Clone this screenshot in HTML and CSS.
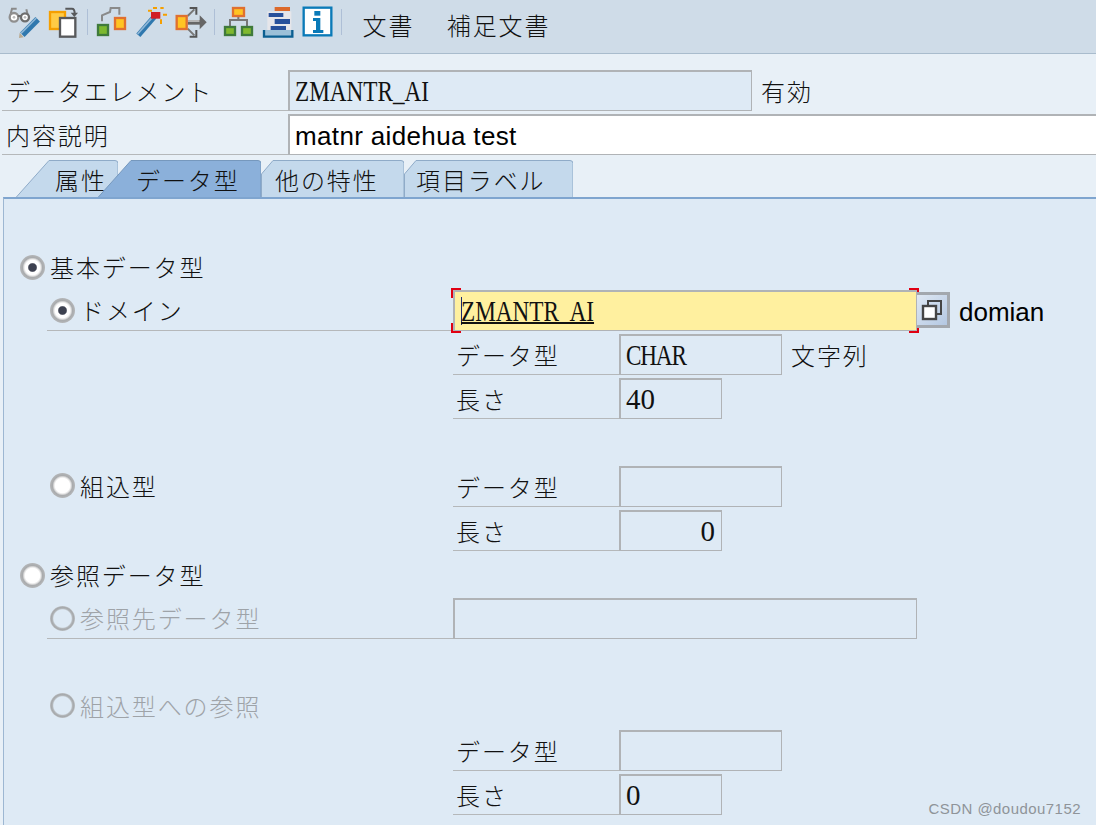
FILE: index.html
```html
<!DOCTYPE html>
<html lang="ja">
<head>
<meta charset="utf-8">
<title>データエレメント</title>
<link rel="stylesheet" href="styles.css">
</head>
<body>
<div class="page">
  <header class="toolbar">
    <svg class="icon" viewBox="21 18 96 96">
      <path d="M110 58 64 104" stroke="#2f78ae" stroke-width="19" fill="none"/>
      <path d="M106 54 60 100" stroke="#8fb6d6" stroke-width="5" fill="none"/>
      <path d="M68 112 54 114 56 98Z" fill="#b9a98f"/>
      <path d="M28 46 33 26h14M80 44l-4-16" stroke="#8a8a8a" stroke-width="6" fill="none"/>
      <circle cx="39" cy="52" r="13" fill="#fff" stroke="#8f8f8f" stroke-width="7"/>
      <circle cx="72" cy="52" r="12" fill="#fff" stroke="#6d6d6d" stroke-width="7"/>
      <path d="M50 48h12" stroke="#6d6d6d" stroke-width="6" fill="none"/>
      <circle cx="39" cy="52" r="4" fill="#bbb"/>
      <circle cx="72" cy="52" r="4" fill="#bbb"/>
    </svg>
    <svg class="icon" viewBox="144 18 96 96">
      <rect x="150" y="36" width="45" height="51" fill="#ffcb45" stroke="#f59f00" stroke-width="7"/>
      <rect x="180" y="54" width="46" height="56" fill="#fff" stroke="#58595b" stroke-width="7"/>
      <path d="M196 26h20q8 0 8 14" stroke="#58595b" stroke-width="6" fill="none"/>
      <path d="M212 38h22l-11 13z" fill="#58595b"/>
    </svg>
    <span class="sep"></span>
    <svg class="icon" viewBox="285 18 96 96">
      <path d="M303 64V46l24-10 2-12h26v20" stroke="#8a8a8a" stroke-width="6" fill="none"/>
      <rect x="291" y="75" width="30" height="30" fill="#7cb82f" stroke="#3f7a3b" stroke-width="7"/>
      <rect x="342" y="54" width="30" height="33" fill="#ffc423" stroke="#e0702f" stroke-width="7"/>
    </svg>
    <svg class="icon" viewBox="402 18 96 96">
      <path d="M460 50 412 106" stroke="#2f78ae" stroke-width="16" fill="none"/>
      <path d="M456 50 410 102" stroke="#8fb6d6" stroke-width="5" fill="none"/>
      <path d="M450 36h28v20h-28z" fill="#d11f26"/>
      <path d="M441 32h12M456 24h12M478 24h10M486 44h12M480 58v14" stroke="#f59f00" stroke-width="6" fill="none"/>
    </svg>
    <svg class="icon" viewBox="520 18 96 96">
      <path d="M558 67h40" stroke="#666" stroke-width="14" fill="none"/>
      <path d="M558 63h36" stroke="#ddd" stroke-width="4" fill="none"/>
      <path d="M594 46l21 21-21 21z" fill="#666"/>
      <path d="M558 48 578 28M558 86l20 20" stroke="#777" stroke-width="6" fill="none"/>
      <path d="M564 24h20v20M564 110h20V90" stroke="#555" stroke-width="6" fill="none"/>
      <rect x="525" y="48" width="30" height="39" fill="#ffc423" stroke="#e0702f" stroke-width="7"/>
    </svg>
    <span class="sep"></span>
    <svg class="icon" viewBox="666 18 96 96">
      <path d="M712 51v9M687 78V60h51v18" stroke="#777" stroke-width="6" fill="none"/>
      <rect x="696" y="24" width="33" height="24" fill="#ffc423" stroke="#e0702f" stroke-width="7"/>
      <rect x="672" y="81" width="30" height="24" fill="#80b92f" stroke="#3f7a3b" stroke-width="7"/>
      <rect x="723" y="81" width="30" height="24" fill="#80b92f" stroke="#3f7a3b" stroke-width="7"/>
    </svg>
    <svg class="icon" viewBox="784 18 96 96">
      <rect x="800" y="34" width="72" height="62" fill="#e6e6ea"/>
      <rect x="822" y="21" width="46" height="12" fill="#dc6a2c"/>
      <rect x="804" y="39" width="44" height="12" fill="#27509b"/>
      <rect x="822" y="57" width="46" height="15" fill="#27509b"/>
      <rect x="810" y="78" width="46" height="12" fill="#27509b"/>
      <path d="M790 90v20h85V90" fill="#9cc0d8" stroke="#0b5f91" stroke-width="7"/>
    </svg>
    <svg class="icon" viewBox="900 18 96 96">
      <rect x="905" y="23" width="83" height="83" fill="#fff" stroke="#0a7ab8" stroke-width="7"/>
      <rect x="937" y="33" width="18" height="14" fill="#0a7ab8"/>
      <path d="M933 54h22v36h9v9h-31v-9h9V63h-9z" fill="#0a7ab8"/>
    </svg>
    <span class="sep"></span>
    <span class="tool-text first">文書</span>
    <span class="tool-text">補足文書</span>
  </header>

  <section class="head">
    <div class="head-row">
      <span class="head-label jp">データエレメント</span>
      <span class="field head-name"><span class="mono">ZMANTR_AI</span></span>
      <span class="jp status">有効</span>
    </div>
    <div class="head-row">
      <span class="head-label jp">内容説明</span>
      <span class="field head-desc">matnr aidehua test</span>
    </div>
  </section>

  <nav class="tabs">
    <div class="tab tab-a"><svg class="tab-bg" viewBox="0 0 103 38" preserveAspectRatio="none"><path d="M.5 38 34 .5H100q3 0 3 3V38Z" fill="#c4d9ec" stroke="#8fabc8"/></svg><span class="jp tab-text">属性</span></div>
    <div class="tab tab-b"><svg class="tab-bg" viewBox="0 0 164 38" preserveAspectRatio="none"><path d="M.5 38 34 .5H161q3 0 3 3V38Z" fill="#8bb0da" stroke="#7698bd"/></svg><span class="jp tab-text">データ型</span></div>
    <div class="tab tab-c"><svg class="tab-bg" viewBox="0 0 143 38" preserveAspectRatio="none"><path d="M.5 38V14L12 .5H140q3 0 3 3V38Z" fill="#c4d9ec" stroke="#8fabc8"/></svg><span class="jp tab-text">他の特性</span></div>
    <div class="tab tab-d"><svg class="tab-bg" viewBox="0 0 169 38" preserveAspectRatio="none"><path d="M.5 38V14L12 .5H166q3 0 3 3V38Z" fill="#c4d9ec" stroke="#8fabc8"/></svg><span class="jp tab-text">項目ラベル</span></div>
  </nav>

  <main class="panel">
    <div class="row top-row">
      <span class="radio checked"></span><span class="jp">基本データ型</span>
    </div>
    <div class="row">
      <div class="main-label"><span class="radio checked"></span><span class="jp">ドメイン</span></div>
      <div class="focus-wrap"><div class="field focus"><span class="caret"></span><span class="mono underline">ZMANTR AI</span></div></div>
      <button class="f4"><svg viewBox="0 0 24 24" width="24" height="24"><rect x="8" y="3" width="13" height="13" fill="none" stroke="#454545" stroke-width="2"/><rect x="3" y="8" width="13" height="13" fill="#fff" stroke="#454545" stroke-width="2.4"/></svg></button>
      <span class="domian">domian</span>
    </div>
    <div class="row indent">
      <span class="sub-label jp">データ型</span><span class="field w162"><span class="mono tight">CHAR</span></span><span class="jp after">文字列</span>
    </div>
    <div class="row indent">
      <span class="sub-label jp">長さ</span><span class="field w102"><span class="mono digits">40</span></span>
    </div>
    <div class="row"></div>
    <div class="row">
      <div class="plain-label"><span class="radio"></span><span class="jp">組込型</span></div>
      <span class="sub-label jp">データ型</span><span class="field w162"></span>
    </div>
    <div class="row indent">
      <span class="sub-label jp">長さ</span><span class="field w102 right"><span class="mono digits">0</span></span>
    </div>
    <div class="row top-row">
      <span class="radio"></span><span class="jp">参照データ型</span>
    </div>
    <div class="row">
      <div class="main-label disabled"><span class="radio off"></span><span class="jp">参照先データ型</span></div>
      <span class="field w464"></span>
    </div>
    <div class="row"></div>
    <div class="row">
      <div class="plain-label disabled"><span class="radio off"></span><span class="jp">組込型への参照</span></div>
    </div>
    <div class="row indent">
      <span class="sub-label jp">データ型</span><span class="field w162"></span>
    </div>
    <div class="row indent">
      <span class="sub-label jp">長さ</span><span class="field w102"><span class="mono digits">0</span></span>
    </div>
    <div class="watermark">CSDN @doudou7152</div>
  </main>
</div>
</body>
</html>
```

FILE: styles.css
```css
* { box-sizing: border-box; }
html, body { margin: 0; padding: 0; }
body {
  width: 1096px;
  height: 825px;
  overflow: hidden;
  background: #e8f0f7;
  color: #111;
  font-family: "Noto Sans CJK JP", sans-serif;
}
.page { display: flex; flex-direction: column; height: 825px; }
.jp {
  font-family: "Noto Sans CJK JP", sans-serif;
  font-size: 24px;
  font-weight: 300;
  letter-spacing: 1.9px;
  line-height: 32px;
  white-space: nowrap;
}

.toolbar {
  display: flex;
  align-items: center;
  gap: 7.5px;
  height: 54px;
  padding: 0 0 9px 8px;
  background: #cfdce8;
  border-bottom: 1px solid #a9bccd;
}
.icon { width: 32px; height: 32px; flex: none; }
.sep { width: 1px; height: 26px; background: #aebfd6; flex: none; }
.tool-text {
  font-size: 24px;
  font-weight: 300;
  letter-spacing: 1.9px;
  margin: 6px 0 0 25px;
  line-height: 32px;
}
.tool-text.first { margin-left: 13px; }

.head { display: flex; flex-direction: column; gap: 3px; padding: 16px 0 0 2px; }
.head-row { display: flex; height: 41px; }
.head-label {
  width: 286px;
  height: 41px;
  padding: 5px 0 0 4px;
  border-bottom: 1px solid #b5b8ba;
}
.field {
  display: flex;
  align-items: center;
  height: 41px;
  padding-left: 5px;
  background: #deeaf5;
  border: 1px solid #b0b3b6;
  border-top-width: 2px;
  border-left-width: 2px;
  overflow: hidden;
  flex: none;
}
.mono {
  display: inline-block;
  font-family: "Liberation Serif", serif;
  font-size: 29px;
  line-height: 34px;
  font-kerning: none;
  word-spacing: 6px;
  transform: scaleX(0.8);
  transform-origin: left center;
  white-space: nowrap;
  color: #111;
}
.mono.tight { letter-spacing: -1.5px; }
.mono.digits { transform: none; }
.head-name { width: 464px; }
.status { margin: 5px 0 0 9px; }
.head-desc {
  width: 808px;
  background: #fff;
  font-family: "Liberation Sans", sans-serif;
  font-size: 26px;
  letter-spacing: 0.35px;
  line-height: 30px;
  padding-top: 2px;
  color: #000;
  border-right: 0;
}

.tabs { display: flex; height: 38px; margin-top: 5px; padding-left: 15px; }
.tab { position: relative; height: 38px; flex: none; }
.tab-bg { position: absolute; left: 0; top: 0; width: 100%; height: 100%; }
.tab-text { position: relative; display: block; padding-top: 4px; }
.tab-a { width: 103px; padding-left: 40px; }
.tab-b { width: 164px; margin-left: -21px; padding-left: 39px; }
.tab-c { width: 143px; padding-left: 14px; }
.tab-d { width: 169px; padding-left: 12px; }

.panel {
  position: relative;
  flex: 1;
  margin: -1px 0 0 3px;
  padding-top: 47px;
  background: #deeaf5;
  border-top: 2px solid #7fa5cf;
  border-left: 1px solid #9db7d2;
}
.row { display: flex; align-items: flex-start; height: 44px; padding-left: 43px; }
.row.indent { padding-left: 449px; }
.row.top-row { align-items: center; padding: 0 0 1px 16px; height: 44px; gap: 5px; }
.row.top-row .jp { margin-top: -1px; }
.radio {
  display: inline-block;
  flex: none;
  width: 25px;
  height: 25px;
  border-radius: 50%;
  background: radial-gradient(circle closest-side, #fff 0 58%, #e4e4e4 68%, #a9abad 80%, #b4b6b8 100%);
}
.radio.checked {
  background: radial-gradient(circle closest-side, #3d4150 0 30%, #fff 40% 58%, #e4e4e4 68%, #a9abad 80%, #b4b6b8 100%);
}
.radio.off {
  background: radial-gradient(circle closest-side, #deeaf5 0 70%, #b2b6b9 80%, #a5a8ab 90%, #bcc0c3 100%);
}
.main-label, .plain-label {
  display: flex;
  align-items: center;
  gap: 5px;
  width: 406px;
  height: 41px;
  padding-left: 3px;
  flex: none;
}
.plain-label { padding-bottom: 2px; }
.main-label { border-bottom: 1px solid #b5b8ba; }
.disabled .jp { color: #9ea3a8; }
.sub-label {
  display: block;
  width: 166px;
  height: 41px;
  padding: 5px 0 0 3px;
  border-bottom: 1px solid #b5b8ba;
  flex: none;
}
.w162 { width: 163px; }
.w102 { width: 103px; }
.w464 { width: 464px; }
.right { justify-content: flex-end; padding-right: 6px; }
.after { margin: 5px 0 0 9px; }

.focus-wrap {
  --c: #e00012;
  margin: -2px -2px 0 -2px;
  padding: 2px;
  height: 45px;
  flex: none;
  background:
    linear-gradient(var(--c), var(--c)) 0 0 / 10px 2px no-repeat,
    linear-gradient(var(--c), var(--c)) 0 0 / 2px 10px no-repeat,
    linear-gradient(var(--c), var(--c)) 100% 0 / 10px 2px no-repeat,
    linear-gradient(var(--c), var(--c)) 100% 0 / 2px 10px no-repeat,
    linear-gradient(var(--c), var(--c)) 0 100% / 10px 2px no-repeat,
    linear-gradient(var(--c), var(--c)) 0 100% / 2px 10px no-repeat,
    linear-gradient(var(--c), var(--c)) 100% 100% / 10px 2px no-repeat,
    linear-gradient(var(--c), var(--c)) 100% 100% / 2px 10px no-repeat;
}
.focus {
  width: 464px;
  background: #fff09f;
  padding-left: 6px;
}
.caret { width: 1px; height: 28px; background: #1c2a6e; margin-right: -1px; flex: none; }
.underline { text-decoration: underline; text-decoration-thickness: 1.5px; }
.f4 {
  display: flex;
  align-items: center;
  justify-content: center;
  width: 33px;
  height: 36px;
  margin: 2px 0 0 0;
  padding: 0;
  flex: none;
  border: 0;
  border-top: 3px solid #a3a8ae;
  border-right: 3px solid #a3a8ae;
  border-bottom: 3px solid #a3a8ae;
  background: linear-gradient(135deg, #dfe8f3, #b4c8e2);
}
.domian {
  margin-left: 9px;
  font-family: "Liberation Sans", sans-serif;
  font-size: 26px;
  line-height: 44px;
  color: #000;
}
.watermark {
  position: absolute;
  right: 15px;
  bottom: 8px;
  font-family: "Liberation Sans", sans-serif;
  font-size: 15px;
  letter-spacing: 0.45px;
  color: #8f9499;
}
```
